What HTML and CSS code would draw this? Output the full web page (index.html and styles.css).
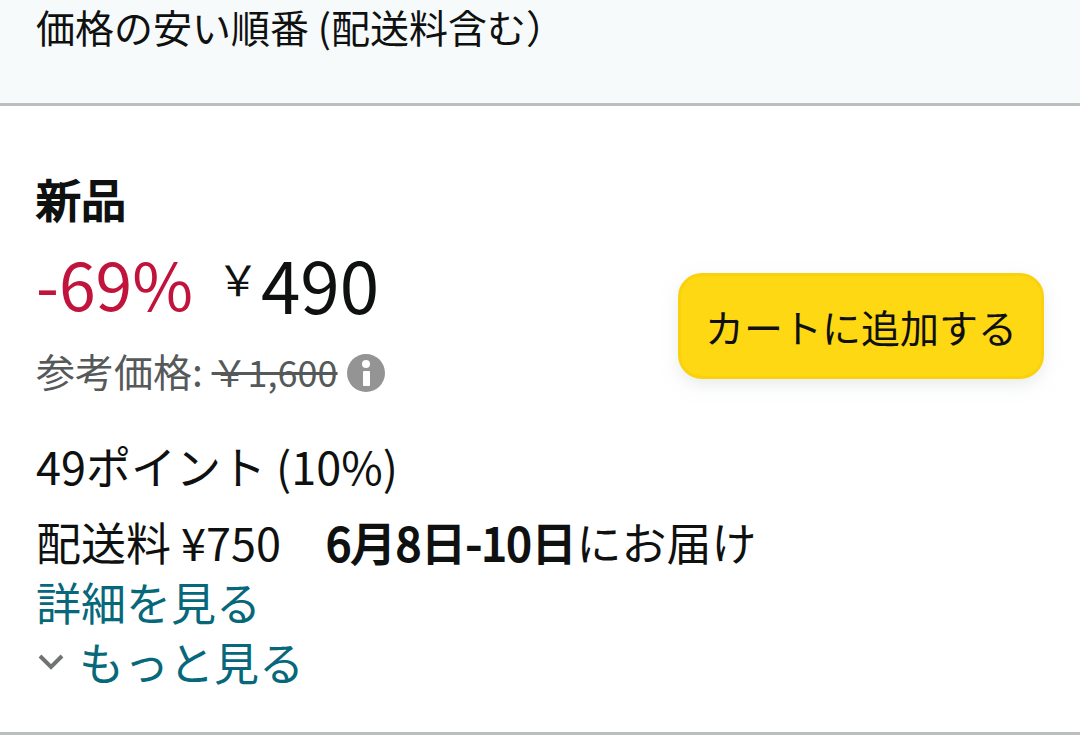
FILE: index.html
```html
<!DOCTYPE html>
<html lang="ja">
<head>
<meta charset="utf-8">
<meta name="viewport" content="width=device-width, initial-scale=1">
<title>出品一覧</title>
<link rel="stylesheet" href="styles.css">
</head>
<body>
<header class="sort-bar">価格の安い順番 (配送料含む）</header>
<main class="offer">
  <h1 class="condition">新品</h1>
  <div class="purchase">
    <div class="pricing">
      <div class="price-row">
        <span class="discount">-69%</span>
        <span class="price"><span class="yen">￥</span>490</span>
      </div>
      <div class="list-price">
        <span>参考価格: <s>￥1,600</s></span>
        <button class="info" type="button" aria-label="参考価格について">
          <svg viewBox="0 0 38 38" width="38" height="38" aria-hidden="true"><circle cx="19" cy="19" r="19" fill="#949494"/><circle cx="19" cy="10" r="4" fill="#fff"/><rect x="16" y="17" width="7" height="15" rx="1" fill="#fff"/></svg>
        </button>
      </div>
    </div>
    <button class="add-cart" type="button">カートに追加する</button>
  </div>
  <p class="points">49ポイント (10%)</p>
  <p class="delivery">配送料 ¥750　<b class="date">6月8日-10日</b>にお届け</p>
  <a class="link" href="#details">詳細を見る</a>
  <a class="link more" href="#more">
    <svg viewBox="0 0 28 16" width="28" height="16" aria-hidden="true"><path d="M4 2l11 11L26 2" fill="none" stroke="#6f7373" stroke-width="4"/></svg>
    もっと見る
  </a>
</main>
</body>
</html>
```
FILE: styles.css
```css
* { box-sizing: border-box; }
body {
  margin: 0;
  background: #fff;
  color: #0f1111;
  font-family: "Noto Sans CJK JP", sans-serif;
}
button { font: inherit; cursor: pointer; }
.sort-bar {
  padding: 0 36px 50px;
  background: #f7fafa;
  border-bottom: 3px solid #bbbfbf;
  font-size: 39px;
  line-height: 53px;
}
.offer {
  padding: 64px 36px 40px;
  border-bottom: 3px solid #bbbfbf;
}
.condition,
.date {
  font-weight: 400;
  -webkit-text-stroke: 2px currentColor;
}
.condition {
  margin: 0;
  font-size: 45px;
  line-height: 58px;
}
.purchase {
  display: flex;
  justify-content: space-between;
  align-items: center;
}
.price-row {
  display: flex;
  align-items: center;
  gap: 24px;
  line-height: 106px;
}
.discount { color: #c0143c; font-size: 66px; }
.price {
  padding-top: 2px;
  font-size: 71px;
}
.yen {
  margin-right: 2px;
  font-size: 42px;
  line-height: 1;
  vertical-align: 18px;
}
.list-price {
  display: flex;
  align-items: center;
  gap: 9px;
  margin: 4px 0 22px;
  color: #565959;
  font-size: 39px;
  line-height: 60px;
}
.list-price s {
  font-size: 36px;
  text-decoration-thickness: 3px;
}
.info {
  display: flex;
  padding: 4px 0 0;
  border: 0;
  background: none;
}
.add-cart {
  padding: 24px;
  border: 3px solid #fad10c;
  border-radius: 24px;
  background: #ffd814;
  color: #0f1111;
  font-size: 39px;
  line-height: 52px;
  box-shadow: 0 6px 15px rgba(213, 217, 217, 0.5);
}
.points {
  margin: 13px 0 0;
  font-size: 45px;
  line-height: 60px;
}
.delivery {
  margin: 16px 0 0;
  font-size: 45px;
  line-height: 60px;
}
.link {
  display: block;
  color: #06687a;
  font-size: 45px;
  line-height: 60px;
  text-decoration: none;
}
.more {
  display: flex;
  align-items: center;
  gap: 15px;
}
```
